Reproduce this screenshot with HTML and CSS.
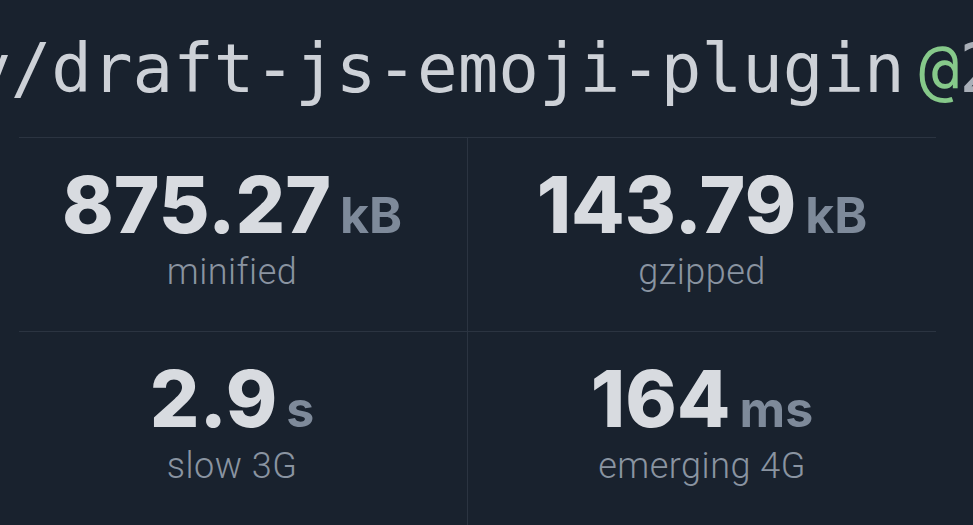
FILE: index.html
```html
<!DOCTYPE html>
<html lang="en">
<head>
<meta charset="utf-8">
<title>draft-js-emoji-plugin</title>
<link rel="stylesheet" href="styles.css">
</head>
<body>
<main class="page">
  <h1 class="package-title"><span class="name">y/draft-js-emoji-plugin</span><span class="at">@</span><span class="version">2.1.3</span></h1>
  <section class="stats">
    <div class="stats-row">
      <div class="stat stat-left">
        <div class="stat-value"><span class="num">875.27</span><span class="unit">kB</span></div>
        <div class="stat-label">minified</div>
      </div>
      <div class="stat stat-right">
        <div class="stat-value"><span class="num">143.79</span><span class="unit">kB</span></div>
        <div class="stat-label">gzipped</div>
      </div>
    </div>
    <div class="stats-row">
      <div class="stat stat-left">
        <div class="stat-value"><span class="num">2.9</span><span class="unit">s</span></div>
        <div class="stat-label">slow 3G</div>
      </div>
      <div class="stat stat-right">
        <div class="stat-value"><span class="num">164</span><span class="unit">ms</span></div>
        <div class="stat-label">emerging 4G</div>
      </div>
    </div>
  </section>
</main>
</body>
</html>
```
FILE: styles.css
```css
html, body {
  margin: 0;
  padding: 0;
  background: #19222e;
  overflow: hidden;
}

.page {
  width: 973px;
  height: 525px;
  overflow: hidden;
}

.package-title {
  margin: 35px 0 0 -30px;
  font-family: "DejaVu Sans Mono", "Liberation Mono", monospace;
  font-weight: normal;
  font-size: 67.5px;
  line-height: 67px;
  color: #cdd1d7;
  white-space: nowrap;
}

.package-title .at {
  margin-left: 14px;
  color: #86c98a;
}

.package-title .version {
  color: #a9afb8;
}

.stats {
  margin: 35px 37px 0 19px;
}

.stats-row {
  display: grid;
  grid-template-columns: 448px 1fr;
  border-top: 1px solid #2b3441;
  height: 193px;
}

.stat {
  display: flex;
  flex-direction: column;
  align-items: center;
  padding-top: 28px;
}

.stat-left {
  padding-right: 22px;
}

.stat-right {
  border-left: 1px solid #2b3441;
}

.stat-value {
  display: flex;
  align-items: baseline;
  font-family: Inter, "Noto Sans", sans-serif;
  line-height: 78px;
}

.num {
  font-size: 78px;
  font-weight: 800;
  color: #d8dbe0;
}

.unit {
  margin-left: 9px;
  font-size: 50px;
  font-weight: 700;
  color: #7e8a9a;
}

.stat-label {
  margin-top: 0;
  font-family: Roboto, Inter, sans-serif;
  font-size: 36px;
  line-height: 36px;
  font-weight: 300;
  letter-spacing: 0.5px;
  color: #8a94a1;
}
```
